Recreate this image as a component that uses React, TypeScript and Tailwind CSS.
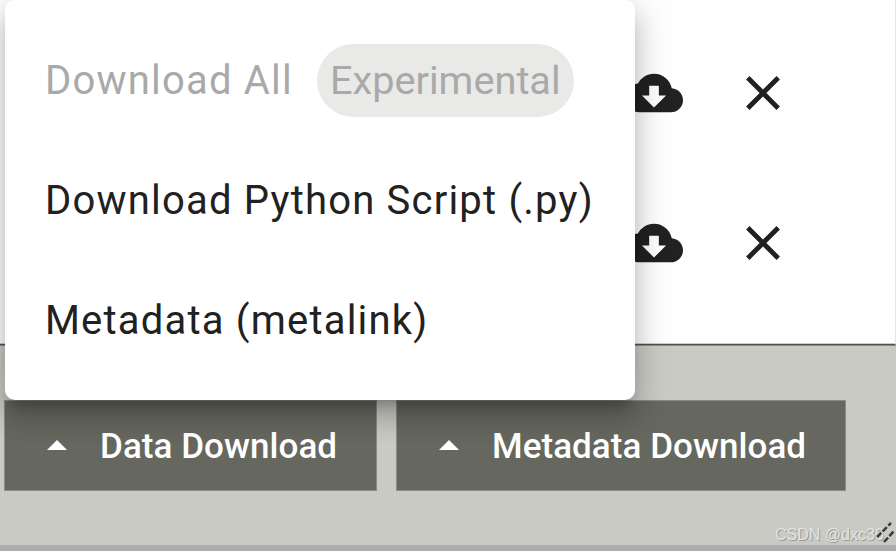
import React from "react";

const CLOUD =
  "M19.35 10.04C18.67 6.59 15.64 4 12 4 9.11 4 6.6 5.64 5.35 8.04 2.34 8.36 0 10.91 0 14c0 3.31 2.69 6 6 6h13c2.76 0 5-2.24 5-5 0-2.64-2.05-4.78-4.65-4.96zM17 13l-5 5-5-5h3V9h4v4h3z";
const CLOSE =
  "M19 6.41L17.59 5 12 10.59 6.41 5 5 6.41 10.59 12 5 17.59 6.41 19 12 13.41 17.59 19 19 17.59 13.41 12z";

function Icon({ d }: { d: string }) {
  return (
    <svg viewBox="0 0 24 24" className="w-[58px] h-[58px] fill-[#212121]">
      <path d={d} />
    </svg>
  );
}

function FileRow() {
  return (
    <div className="h-[150px] flex items-center justify-end gap-[51px] pr-[103px]">
      <Icon d={CLOUD} />
      <Icon d={CLOSE} />
    </div>
  );
}

function FooterButton({ label, width }: { label: string; width: string }) {
  return (
    <button className={`${width} h-[91px] flex items-center pl-[28px] bg-[#666860] border border-[#8b8c85] text-white text-[35px] tracking-[0.05px] font-medium`}>
      <svg viewBox="0 0 24 24" className="w-[48px] h-[48px] fill-white">
        <path d="M7 14l5-5 5 5z" />
      </svg>
      <span className="ml-[19px] pt-[3px]">{label}</span>
    </button>
  );
}

export default function App() {
  return (
    <div className="relative w-[896px] h-[551px] overflow-hidden flex flex-col bg-white font-['Roboto',sans-serif]">
      {/* File list */}
      <div className="h-[345px] pt-[18px] bg-[#fefefe] border-b border-b-[#4f4f4f] border-r border-r-[#e4e4e4] shadow-[inset_0_-1px_0_#cccccc]">
        <FileRow />
        <FileRow />
      </div>

      {/* Footer buttons */}
      <div className="flex-1 bg-[#c9cac4] border-t border-t-[#8a8a86] pt-[54px] pl-[4px] flex items-start gap-[19px]">
        <FooterButton label="Data Download" width="w-[373px]" />
        <FooterButton label="Metadata Download" width="w-[450px]" />
      </div>
      <div className="h-[6px] bg-[#adadad]" />

      {/* Watermark + resize handle */}
      <span className="absolute left-[775px] bottom-[7px] text-[16px] leading-[18px] text-[#e4e4e0] font-['Liberation_Sans',sans-serif] [text-shadow:1px_1px_0_#9a9a96] whitespace-nowrap">
        CSDN @dxc36
      </span>
      <svg viewBox="0 0 20 22" className="absolute left-[875px] bottom-[7px] w-[20px] h-[22px] stroke-[#3c3c3c] stroke-[2.5]" fill="none">
        <path d="M2 15L16 1M9 20L19 9" strokeDasharray="6 2" />
      </svg>

      {/* Dropdown menu */}
      <div className="absolute left-[5px] top-0 w-[630px] h-[400px] py-[20px] bg-white rounded-[10px] shadow-[0_12px_12px_-7px_rgba(0,0,0,0.2),0_19px_24px_2px_rgba(0,0,0,0.14),0_7px_34px_5px_rgba(0,0,0,0.12)] text-[40px] tracking-[1.2px] text-[#212121]">
        <div className="h-[120px] flex items-center pl-[40px] text-[#a9a9a9]">
          <span className="pt-[2px]">Download All</span>
          <span className="ml-[24px] h-[73px] px-[13px] pt-[2px] flex items-center rounded-full bg-[#e9e9e8] text-[39.7px] tracking-normal">Experimental</span>
        </div>
        <div className="h-[120px] pt-[2px] flex items-center pl-[40px]">Download Python Script (.py)</div>
        <div className="h-[120px] pt-[2px] flex items-center pl-[40px]">Metadata (metalink)</div>
      </div>
    </div>
  );
}
